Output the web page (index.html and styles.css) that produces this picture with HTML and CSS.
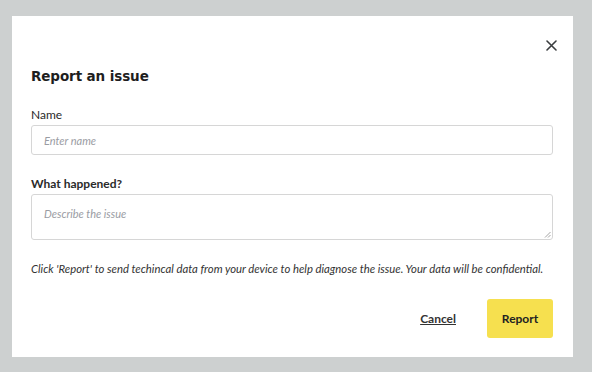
FILE: index.html
```html
<!DOCTYPE html>
<html>
<head>
<meta charset="utf-8">
<link rel="stylesheet" href="styles.css">
</head>
<body>
<div class="dialog">
  <div class="close-row">
    <button class="close" aria-label="Close">
      <svg width="11" height="11" viewBox="0 0 11 11"><path d="M1 1L10 10M10 1L1 10" stroke="#3a3d3f" stroke-width="1.6" stroke-linecap="round"/></svg>
    </button>
  </div>
  <h1 class="title">Report an issue</h1>
  <label class="label">Name</label>
  <div class="input"><span class="ph">Enter name</span></div>
  <label class="label label-2">What happened?</label>
  <div class="textarea"><span class="ph">Describe the issue</span>
    <svg class="grip" width="7" height="7" viewBox="0 0 7 7"><path d="M6.5 1L1 6.5M6.5 4L4 6.5" stroke="#9a9a9a" stroke-width="0.9"/></svg>
  </div>
  <p class="note">Click 'Report' to send techincal data from your device to help diagnose the issue. Your data will be confidential.</p>
  <div class="actions">
    <a class="cancel">Cancel</a>
    <button class="report">Report</button>
  </div>
</div>
</body>
</html>
```
FILE: styles.css
```css
html, body {
  margin: 0;
  padding: 0;
}
body {
  background: #cdd0d0;
  width: 592px;
  height: 372px;
  padding: 16px 0 0 12px;
  box-sizing: border-box;
  font-family: Lato, "Open Sans", sans-serif;
}
.dialog {
  width: 561px;
  height: 341px;
  background: #fff;
  box-sizing: border-box;
  padding: 0 20px 0 19px;
  display: flex;
  flex-direction: column;
}
.close-row {
  display: flex;
  justify-content: flex-end;
  padding-top: 24px;
  margin-right: -4px;
}
.close {
  border: 0;
  background: none;
  padding: 0;
  width: 11px;
  height: 11px;
  display: flex;
}
.title {
  margin: 17px 0 0;
  font-family: "DejaVu Sans", sans-serif;
  font-weight: 700;
  font-size: 13.5px;
  line-height: 16px;
  color: #1e1e1e;
  letter-spacing: -0.1px;
}
.label {
  display: block;
  margin-top: 24px;
  font-size: 12px;
  line-height: 14px;
  color: #2a2a2a;
}
.label-2 {
  margin-top: 22px;
  font-weight: 700;
}
.input, .textarea {
  margin-top: 3px;
  border: 1px solid #d6d6d6;
  border-radius: 3px;
  box-sizing: border-box;
  padding: 0 12px;
  position: relative;
}
.input {
  height: 30px;
  display: flex;
  align-items: center;
}
.textarea {
  height: 46px;
  padding-top: 7px;
}
.ph {
  font-style: italic;
  font-size: 11px;
  color: #9a9ca3;
}
.grip {
  position: absolute;
  right: 1px;
  bottom: 1px;
}
.note {
  margin: 22px 0 0;
  font-style: italic;
  font-size: 11.3px;
  line-height: 14px;
  color: #333;
  white-space: nowrap;
}
.actions {
  margin-top: 23px;
  display: flex;
  justify-content: flex-end;
  align-items: center;
  gap: 31px;
}
.cancel {
  font-size: 12px;
  font-weight: 700;
  color: #333;
  text-decoration: underline;
}
.report {
  width: 66px;
  height: 39px;
  border: 0;
  border-radius: 3px;
  background: #f6e04f;
  font-family: Lato, sans-serif;
  font-weight: 700;
  font-size: 12px;
  color: #222;
}
```
